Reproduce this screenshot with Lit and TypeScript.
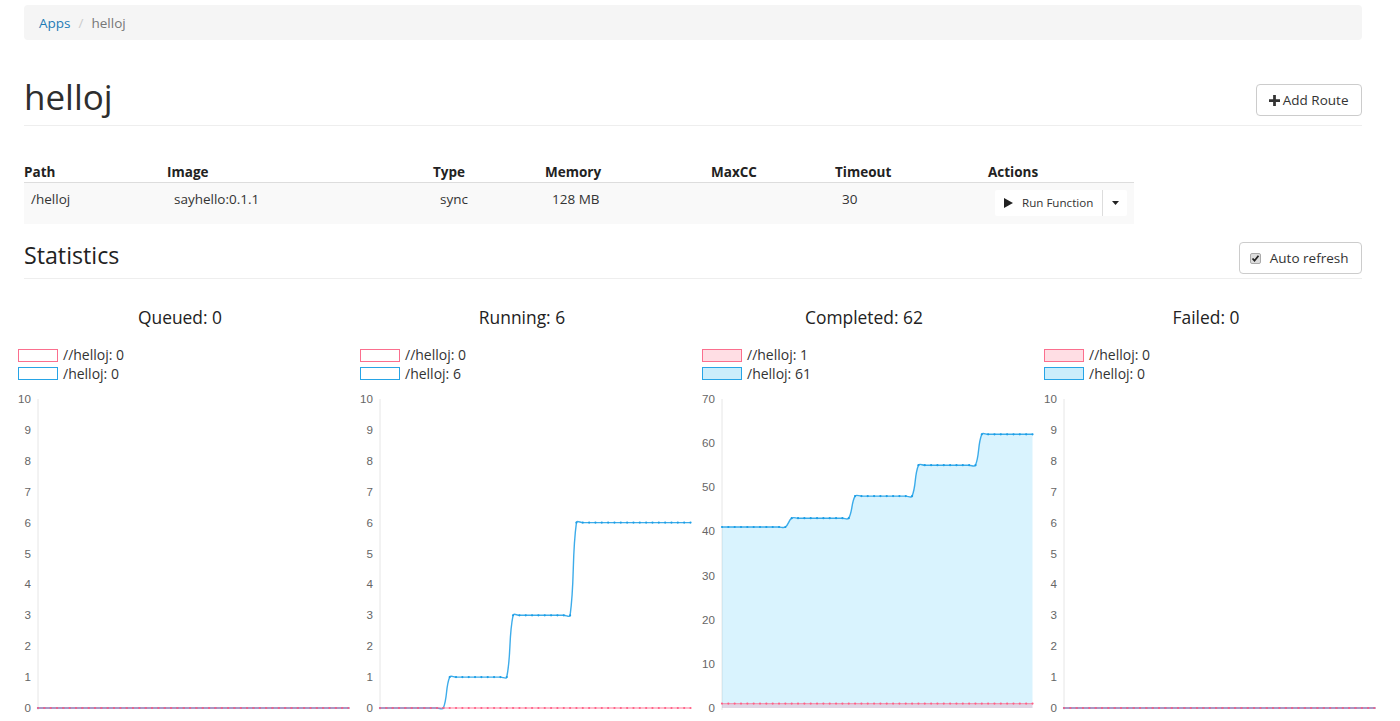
import { LitElement, html, css, svg } from 'lit';
import { customElement } from 'lit/decorators.js';

interface Series {
  values: number[];
  color: string;
  fill: string;
}

interface ChartData {
  title: string;
  max: number;
  step: number;
  legend: { label: string; filled: boolean; kind: string }[];
  red: number[];
  blue: number[];
  filled: boolean;
}

const RED = '#ff5f86';
const BLUE = '#1b9ee6';
const PLOT_W = 310.5;
const PLOT_H = 309;
const LEFT = 29;
const TOP = 8;

// 50 samples, steps happen at the given indexes
function steps(start: number, changes: [number, number][]): number[] {
  const out: number[] = [];
  let cur = start;
  for (let i = 0; i < 50; i++) {
    for (const c of changes) if (c[0] === i) cur = c[1];
    out.push(cur);
  }
  return out;
}

const zeros = steps(0, []);

const CHARTS: ChartData[] = [
  {
    title: 'Queued: 0', max: 10, step: 1, filled: false,
    legend: [{ label: '//helloj: 0', filled: false, kind: 'red' }, { label: '/helloj: 0', filled: false, kind: 'blue' }],
    red: zeros, blue: zeros,
  },
  {
    title: 'Running: 6', max: 10, step: 1, filled: false,
    legend: [{ label: '//helloj: 0', filled: false, kind: 'red' }, { label: '/helloj: 6', filled: false, kind: 'blue' }],
    red: zeros, blue: steps(0, [[11, 1], [21, 3], [31, 6]]),
  },
  {
    title: 'Completed: 62', max: 70, step: 10, filled: true,
    legend: [{ label: '//helloj: 1', filled: true, kind: 'red' }, { label: '/helloj: 61', filled: true, kind: 'blue' }],
    red: steps(1, []), blue: steps(41, [[11, 43], [21, 48], [31, 55], [41, 62]]),
  },
  {
    title: 'Failed: 0', max: 10, step: 1, filled: true,
    legend: [{ label: '//helloj: 0', filled: true, kind: 'red' }, { label: '/helloj: 0', filled: true, kind: 'blue' }],
    red: zeros, blue: zeros,
  },
];

function points(values: number[], max: number): [number, number][] {
  const dx = PLOT_W / (values.length - 1);
  return values.map((v, i) => [LEFT + i * dx, TOP + PLOT_H - (v / max) * PLOT_H]);
}

// same spline as chart.js line elements, tension 0.4
function linePath(pts: [number, number][]): string {
  const t = 0.4;
  const ctrl = pts.map((p, i) => {
    const a = pts[Math.max(i - 1, 0)];
    const b = pts[Math.min(i + 1, pts.length - 1)];
    const d01 = Math.hypot(p[0] - a[0], p[1] - a[1]);
    const d12 = Math.hypot(b[0] - p[0], b[1] - p[1]);
    const sum = d01 + d12 || 1;
    const fa = (t * d01) / sum;
    const fb = (t * d12) / sum;
    return {
      px: p[0] - fa * (b[0] - a[0]),
      py: p[1] - fa * (b[1] - a[1]),
      nx: p[0] + fb * (b[0] - a[0]),
      ny: p[1] + fb * (b[1] - a[1]),
    };
  });
  let d = `M${pts[0][0]} ${pts[0][1]}`;
  for (let i = 1; i < pts.length; i++) {
    d += `C${ctrl[i - 1].nx} ${ctrl[i - 1].ny} ${ctrl[i].px} ${ctrl[i].py} ${pts[i][0]} ${pts[i][1]}`;
  }
  return d;
}

function drawSeries(s: Series, max: number, lineOpacity: number) {
  const pts = points(s.values, max);
  const d = linePath(pts);
  const base = TOP + PLOT_H;
  return svg`
    <path d="${d}L${LEFT + PLOT_W} ${base}L${LEFT} ${base}Z" fill=${s.fill}></path>
    <path d=${d} fill="none" stroke=${s.color} stroke-width="1.4" opacity=${lineOpacity}></path>
    ${pts.map((p) => svg`<circle cx=${p[0]} cy=${p[1]} r="1.1" fill=${s.color}></circle>`)}
  `;
}

@customElement('line-chart')
export class LineChart extends LitElement {
  static properties = { data: { attribute: false } };
  declare data: ChartData;

  static styles = css`
    :host {
      display: block;
      min-width: 0;
    }
    h4 {
      margin: 0;
      text-align: center;
      font-size: 17.4px;
      font-weight: 400;
      line-height: 25px;
      color: #222;
    }
    .legend {
      margin: 16px 0 0 9px;
      display: flex;
      flex-direction: column;
      gap: 0.7px;
    }
    .item {
      display: flex;
      align-items: center;
      gap: 5px;
      height: 18px;
      font-size: 14px;
      line-height: 17px;
      color: #333;
    }
    .item .label {
      margin-top: -1px;
    }
    .swatch {
      width: 40px;
      height: 13px;
      box-sizing: border-box;
      border: 1.5px solid;
      background: #fff;
    }
    .swatch.red { border-color: #fb6f8e; }
    .swatch.blue { border-color: #27a4e6; }
    .swatch.red.on { background: #ffdee4; }
    .swatch.blue.on { background: #cbedfb; }
    svg {
      display: block;
      margin-top: 8px;
      width: 342px;
      height: 332px;
    }
    text {
      font-family: "Liberation Sans", Arial, sans-serif;
      font-size: 11.6px;
      fill: #666;
      text-anchor: end;
    }
  `;

  render() {
    const c = this.data;
    const ticks: number[] = [];
    for (let v = 0; v <= c.max; v += c.step) ticks.push(v);
    const base = TOP + PLOT_H;
    return html`
      <h4>${c.title}</h4>
      <div class="legend">
        ${c.legend.map((l) => html`
          <div class="item">
            <span class="swatch ${l.kind} ${l.filled ? 'on' : ''}"></span>
            <span class="label">${l.label}</span>
          </div>`)}
      </div>
      <svg viewBox="0 0 342 332">
        ${ticks.map((v) => svg`<text x="22" y=${base - (v / c.max) * PLOT_H + 4}>${v}</text>`)}
        <line x1=${LEFT} x2=${LEFT} y1=${TOP} y2=${base + 2} stroke="#e6e6e6" stroke-width="1"></line>
        ${drawSeries({ values: c.blue, color: BLUE, fill: c.filled ? 'rgba(0,175,250,0.15)' : 'none' }, c.max, 0.85)}
        ${drawSeries({ values: c.red, color: RED, fill: c.filled ? 'rgba(255,99,132,0.2)' : 'none' }, c.max, 0.55)}
      </svg>
    `;
  }
}

@customElement('app-root')
export class AppRoot extends LitElement {
  static styles = css`
    :host {
      display: block;
      padding: 5px 38px 0 24px;
      font-family: "Open Sans", sans-serif;
      font-size: 13.5px;
      color: #333;
      overflow: hidden;
      height: 716px;
    }
    .crumbs {
      display: flex;
      gap: 8px;
      height: 35px;
      align-items: center;
      padding: 0 15px;
      background: #f5f5f5;
      border-radius: 4px;
      color: #777;
    }
    .crumbs a {
      color: #1f7cb5;
      text-decoration: none;
    }
    .crumbs .sep { color: #ccc; }
    .head {
      display: flex;
      justify-content: space-between;
      align-items: flex-end;
      border-bottom: 1px solid #eee;
    }
    .head.main {
      margin-top: 28px;
      height: 48px;
      padding-bottom: 9px;
    }
    .head.sub {
      height: 30px;
      padding-bottom: 4px;
      margin-top: 20.5px;
    }
    h1 {
      margin: 0 0 -5px;
      font-size: 35px;
      font-weight: 400;
      line-height: 48px;
      color: #2e2e2e;
    }
    h3 {
      margin: 0 0 4px;
      font-size: 23.2px;
      font-weight: 400;
      line-height: 30px;
      color: #222;
    }
    .btn {
      display: inline-flex;
      align-items: center;
      box-sizing: border-box;
      height: 32px;
      padding: 0 12.5px;
      background: #fff;
      border: 1px solid #ccc;
      border-radius: 4px;
      font: inherit;
      color: #333;
    }
    .btn.add { gap: 3px; padding-left: 12px; }
    .btn.refresh { gap: 9px; padding-left: 10px; }
    table {
      margin-top: 36px;
      width: 1110px;
      table-layout: fixed;
      border-collapse: collapse;
    }
    th {
      text-align: left;
      padding: 0;
      height: 20px;
      font-weight: 700;
      line-height: 20px;
      color: #222;
      border-bottom: 1.5px solid #ddd;
    }
    th:nth-child(1) { width: 143px; }
    th:nth-child(2) { width: 266px; }
    th:nth-child(3) { width: 112px; }
    th:nth-child(4) { width: 166px; }
    th:nth-child(5) { width: 124px; }
    th:nth-child(6) { width: 153px; }
    td {
      background: #f9f9f9;
      height: 41px;
      padding: 0 7px 9px;
      box-sizing: border-box;
      line-height: 20px;
    }
    td.actions { padding: 0 7px; }
    .split {
      display: flex;
      height: 26px;
      background: #fff;
      border-radius: 2px;
      font-size: 11.6px;
      color: #333;
    }
    .split .run {
      flex: 1;
      display: flex;
      align-items: center;
      gap: 9px;
      padding-left: 9px;
      border-right: 1px solid #ddd;
    }
    .split .more {
      width: 24px;
      display: flex;
      align-items: center;
      justify-content: center;
    }
    .charts {
      margin: 26px -15px 0;
      display: grid;
      grid-template-columns: repeat(4, 342px);
    }
  `;

  render() {
    return html`
      <nav class="crumbs"><a>Apps</a><span class="sep">/</span><span>helloj</span></nav>
      <div class="head main">
        <h1>helloj</h1>
        <button class="btn add">
          <svg width="11" height="11" viewBox="0 0 12 12"><path d="M4.5 0h3v4.5H12v3H7.5V12h-3V7.5H0v-3h4.5z" fill="#333"></path></svg>
          Add Route
        </button>
      </div>
      <table>
        <thead>
          <tr><th>Path</th><th>Image</th><th>Type</th><th>Memory</th><th>MaxCC</th><th>Timeout</th><th>Actions</th></tr>
        </thead>
        <tbody>
          <tr>
            <td>/helloj</td><td>sayhello:0.1.1</td><td>sync</td><td>128 MB</td><td></td><td>30</td>
            <td class="actions">
              <div class="split">
                <div class="run">
                  <svg width="9" height="10" viewBox="0 0 9 10"><path d="M0 0l9 5-9 5z" fill="#222"></path></svg>
                  Run Function
                </div>
                <div class="more"><svg width="7" height="4" viewBox="0 0 7 4"><path d="M0 0h7L3.5 4z" fill="#222"></path></svg></div>
              </div>
            </td>
          </tr>
        </tbody>
      </table>
      <div class="head sub">
        <h3>Statistics</h3>
        <button class="btn refresh">
          <svg width="11" height="11" viewBox="0 0 11 11">
            <rect x=".5" y=".5" width="10" height="10" rx="1.5" fill="#ddd" stroke="#aaa"></rect>
            <path d="M2.5 5.5l2 2.2 4-5" fill="none" stroke="#222" stroke-width="1.8"></path>
          </svg>
          Auto refresh
        </button>
      </div>
      <div class="charts">
        ${CHARTS.map((c) => html`<line-chart .data=${c}></line-chart>`)}
      </div>
    `;
  }
}
